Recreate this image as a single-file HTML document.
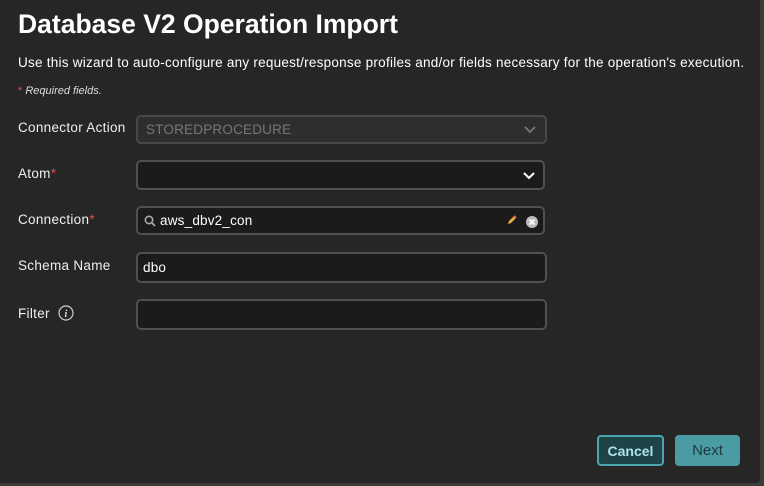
<!DOCTYPE html>
<html><head><style>
body{margin:0;width:764px;height:486px;background:#3a3a3a;font-family:"Liberation Sans",sans-serif;overflow:hidden;position:relative}
.p{position:absolute;left:0;top:0;width:760px;height:483px;background:#262626;border-bottom-right-radius:4px}
.t{position:absolute;left:18px;top:9px;color:#fff;font-size:26.5px;font-weight:bold}
.d{position:absolute;left:18px;top:55px;color:#fff;font-size:13.5px;letter-spacing:0.25px}
.r{position:absolute;left:18px;top:85px;color:#ddd;font-size:11px;font-style:italic}
.r b{color:#e5484d;font-style:normal;font-weight:normal}
.l{position:absolute;left:18px;color:#eee;font-size:13.5px;letter-spacing:0.3px}
.l b{color:#e5484d;font-weight:normal}
.f{position:absolute;left:136px;box-sizing:border-box;border:2px solid #505050;border-radius:5px;background:#1b1b1b;color:#fff;font-size:13.5px;letter-spacing:0.2px;padding-left:8px;display:flex;align-items:center}
.btn{position:absolute;top:435px;height:31px;box-sizing:border-box;border-radius:4px;font-size:14px;font-weight:bold;display:flex;align-items:center;justify-content:center}
</style></head><body>
<div class="p">
<div class="t">Database V2 Operation Import</div>
<div class="d">Use this wizard to auto-configure any request/response profiles and/or fields necessary for the operation's execution.</div>
<div class="r"><b>*</b> Required fields.</div>

<div class="l" style="top:120px">Connector Action</div>
<div class="f" style="top:115px;width:411px;height:29px;background:#2e2e2e;color:#777;border-color:#484848">STOREDPROCEDURE
<svg style="position:absolute;right:9px;top:9px" width="12" height="8"><path d="M1 1l5 5 5-5" stroke="#777" stroke-width="1.8" fill="none"/></svg></div>

<div class="l" style="top:166px">Atom<b>*</b></div>
<div class="f" style="top:160px;width:409px;height:30px">
<svg style="position:absolute;right:8px;top:10px" width="12" height="8"><path d="M1 1l5 5 5-5" stroke="#fff" stroke-width="2" fill="none"/></svg></div>

<div class="l" style="top:212px">Connection<b>*</b></div>
<div class="f" style="top:206px;width:409px;height:29px;padding-left:6px">
<svg width="12" height="12" style="margin-right:4px"><circle cx="5" cy="5" r="3.7" stroke="#aaa" stroke-width="1.6" fill="none"/><path d="M8 8l3 3" stroke="#aaa" stroke-width="1.8"/></svg>aws_dbv2_con
<svg style="position:absolute;right:26px;top:7px" width="10" height="10"><path d="M1 9l1-3 5-5 2 2-5 5z" fill="#f0b030"/><path d="M7 1l2 2" stroke="#e06060" stroke-width="2"/></svg>
<svg style="position:absolute;right:5px;top:8px" width="12" height="12"><circle cx="6" cy="6" r="6" fill="#bbb"/><path d="M3.5 3.5l5 5M8.5 3.5l-5 5" stroke="#fff" stroke-width="1.6"/></svg></div>

<div class="l" style="top:258px">Schema Name</div>
<div class="f" style="top:252px;width:411px;height:31px;padding-left:5px">dbo</div>

<div class="l" style="top:306px">Filter
<svg style="position:absolute;left:40px;top:-1px" width="16" height="16"><circle cx="8" cy="8" r="7" stroke="#ccc" stroke-width="1.2" fill="none"/><text x="8" y="12" text-anchor="middle" fill="#ddd" font-size="10" font-style="italic" font-weight="bold" font-family="Liberation Serif">i</text></svg></div>
<div class="f" style="top:299px;width:411px;height:31px"></div>

<div class="btn" style="left:597px;width:67px;background:#1f4448;border:2px solid #4aa5ad;outline:1px solid #1f4448;outline-offset:-4px;color:#a8e4ea">Cancel</div>
<div class="btn" style="left:675px;width:65px;background:#4a9ba3;color:#1e3a3d;font-weight:normal;font-size:15px">Next</div>
</div>
</body></html>
